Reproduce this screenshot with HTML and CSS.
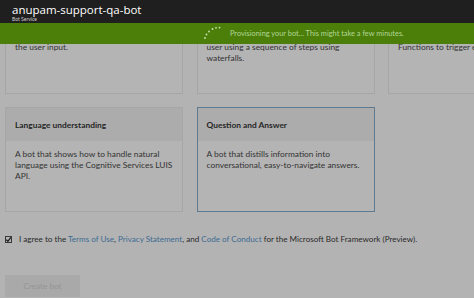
FILE: index.html
```html
<!DOCTYPE html>
<html lang="en">

<head>
    <meta charset="utf-8">
    <title>anupam-support-qa-bot - Bot Service</title>
    <link rel="stylesheet" href="styles.css">
</head>

<body>

    <header class="topbar">
        <h1>anupam-support-qa-bot</h1>
        <p>Bot Service</p>
    </header>

    <div class="notice">
        <svg class="spinner" width="20" height="14" viewBox="0 0 20 14">
            <circle cx="2" cy="12" r="0.9" />
            <circle cx="3.5" cy="8.5" r="0.9" />
            <circle cx="6" cy="5.5" r="0.9" />
            <circle cx="9.5" cy="3" r="0.9" />
            <circle cx="13" cy="1.8" r="0.9" />
            <circle cx="16.5" cy="1.6" r="0.9" />
        </svg>
        <span>Provisioning your bot... This might take a few minutes.</span>
    </div>

    <main class="content">
        <div class="templates">
            <div class="card">
                <div class="card-head">Basic</div>
                <div class="card-body">A simple bot that echoes back<br>the user input.</div>
            </div>
            <div class="card">
                <div class="card-head">Form</div>
                <div class="card-body">A bot that collects input from the<br>user using a sequence of steps using<br>waterfalls.</div>
            </div>
            <div class="card">
                <div class="card-head">Proactive</div>
                <div class="card-body">A bot that uses Azure<br>Functions to trigger events.</div>
            </div>
            <div class="card">
                <div class="card-head">Language understanding</div>
                <div class="card-body">A bot that shows how to handle natural language using the Cognitive Services LUIS API.</div>
            </div>
            <div class="card selected">
                <div class="card-head">Question and Answer</div>
                <div class="card-body">A bot that distills information into conversational, easy-to-navigate answers.</div>
            </div>
        </div>

        <div class="agree">
            <span class="check">
                <svg width="7" height="7" viewBox="0 0 7 7">
                    <path d="M1.2 3.6 L2.9 5.3 L5.9 1.4" />
                </svg>
            </span>
            <span>I agree to the <a href="#">Terms of Use</a>, <a href="#">Privacy Statement</a>, and <a href="#">Code of Conduct</a> for the Microsoft Bot Framework (Preview).</span>
        </div>

        <button class="create" disabled>Create bot</button>
    </main>

</body>

</html>
```

FILE: styles.css
```css
body {
    margin: 0;
    background-color: #b3b3b3;
    font-family: Lato, 'Open Sans', sans-serif;
    font-size: 8.4px;
    color: #2c2c2c;
    height: 298px;
    overflow: hidden;
}

.topbar {
    background-color: #1f1f1f;
    height: 23px;
    padding-left: 12px;
    box-sizing: border-box;
    color: white;
}

.topbar h1 {
    margin: 0;
    padding-top: 2px;
    font-family: 'Open Sans', sans-serif;
    font-size: 11.5px;
    font-weight: normal;
    line-height: 15px;
}

.topbar p {
    margin: 0;
    font-size: 5px;
    line-height: 5px;
    color: #cfcfcf;
}

.notice {
    background-color: #4c7f0a;
    height: 21px;
    display: flex;
    align-items: center;
    padding-left: 203px;
    gap: 7px;
    color: #b2d694;
    font-size: 7.4px;
}

.spinner {
    fill: #c9e3b2;
    margin-top: -2px;
}

.content {
    height: 254px;
    overflow: hidden;
    padding-left: 5px;
}

.templates {
    display: grid;
    grid-template-columns: 178px 178px 178px;
    grid-auto-rows: 105px;
    column-gap: 13.5px;
    row-gap: 13px;
    margin-top: -55px;
}

.card {
    border: 1px solid #a6a6a6;
    box-sizing: border-box;
    background-color: #b4b4b4;
}

.card.selected {
    border: 1.5px solid #5f7b92;
}

.card-head {
    height: 33px;
    display: flex;
    align-items: center;
    padding-left: 9px;
    background-color: #acacac;
    font-weight: bold;
    color: #262626;
}

.card-body {
    padding: 8px 9px;
    line-height: 11px;
    color: #333;
}

.agree {
    display: flex;
    align-items: center;
    gap: 7px;
    margin-top: 22px;
    font-size: 8.1px;
    color: #2a2a2a;
}

.agree a {
    color: #3d6b92;
    text-decoration: none;
}

.check {
    width: 7px;
    height: 7px;
    border: 1px solid #3a3a3a;
    box-sizing: border-box;
    display: flex;
}

.check svg {
    fill: none;
    stroke: #1d1d1d;
    stroke-width: 1.3;
    margin: -1px;
}

.create {
    margin-top: 31px;
    width: 75px;
    height: 22px;
    border: none;
    background-color: #a9a9a9;
    color: #959595;
    font-family: Lato, sans-serif;
    font-size: 8.2px;
    padding: 0;
}
```
